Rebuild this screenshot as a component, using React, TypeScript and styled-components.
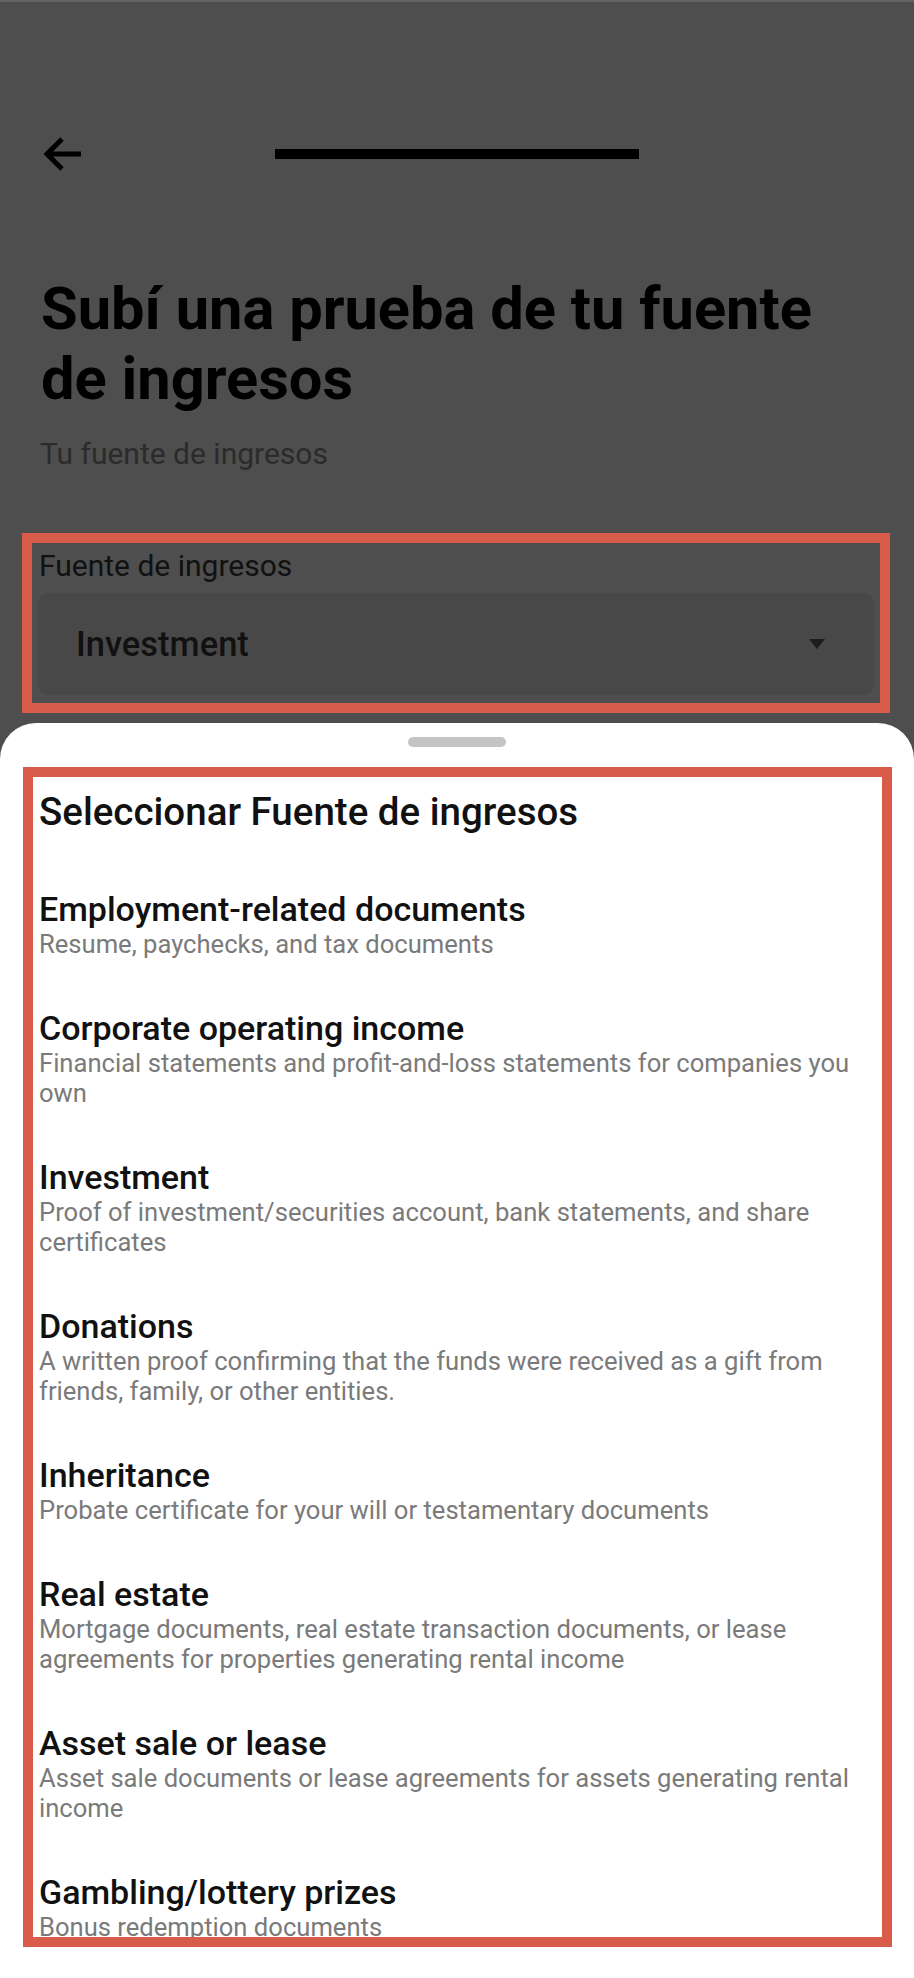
import styled, { createGlobalStyle } from "styled-components";

const GlobalStyle = createGlobalStyle`
  html, body {
    margin: 0;
    padding: 0;
    background: #4e4e4e;
  }
  body {
    font-family: Roboto, "Noto Sans", "Liberation Sans", sans-serif;
  }
`;

const sources = [
  { title: "Employment-related documents", text: "Resume, paychecks, and tax documents" },
  {
    title: "Corporate operating income",
    text: "Financial statements and profit-and-loss statements for companies you own",
  },
  {
    title: "Investment",
    text: "Proof of investment/securities account, bank statements, and share certificates",
  },
  {
    title: "Donations",
    text: "A written proof confirming that the funds were received as a gift from friends, family, or other entities.",
  },
  { title: "Inheritance", text: "Probate certificate for your will or testamentary documents" },
  {
    title: "Real estate",
    text: "Mortgage documents, real estate transaction documents, or lease agreements for properties generating rental income",
  },
  {
    title: "Asset sale or lease",
    text: "Asset sale documents or lease agreements for assets generating rental income",
  },
  { title: "Gambling/lottery prizes", text: "Bonus redemption documents" },
];

function App() {
  return (
    <Page>
      <GlobalStyle />
      <TopBar>
        <BackButton aria-label="Volver">
          <svg width="40" height="36" viewBox="0 0 40 36" fill="none">
            <path
              d="M39 18H5 M20 3 L5 18 L20 33"
              stroke="#000"
              strokeWidth="5"
              strokeLinejoin="miter"
            />
          </svg>
        </BackButton>
        <Progress />
        <span />
      </TopBar>

      <Title>Subí una prueba de tu fuente de ingresos</Title>
      <Subtitle>Tu fuente de ingresos</Subtitle>

      <FieldFrame>
        <FieldLabel>Fuente de ingresos</FieldLabel>
        <Select>
          <SelectValue>Investment</SelectValue>
          <svg width="16" height="10" viewBox="0 0 16 10">
            <polygon points="0,0 16,0 8,10" fill="#1d1d1d" />
          </svg>
        </Select>
      </FieldFrame>

      <Sheet>
        <Handle />
        <ListFrame>
          <SheetHeading>Seleccionar Fuente de ingresos</SheetHeading>
          <OptionList>
            {sources.map((s) => (
              <Option key={s.title}>
                <OptionTitle>{s.title}</OptionTitle>
                <OptionText>{s.text}</OptionText>
              </Option>
            ))}
          </OptionList>
        </ListFrame>
      </Sheet>
    </Page>
  );
}

export default App;

const Page = styled.div`
  width: 914px;
  height: 1978px;
  box-sizing: border-box;
  border-top: 2px solid #646464;
  background: #4e4e4e;
  display: flex;
  flex-direction: column;
  overflow: hidden;
`;

const TopBar = styled.div`
  margin-top: 128px;
  height: 48px;
  padding: 0 42px;
  display: grid;
  grid-template-columns: 1fr 364px 1fr;
  align-items: center;
`;

const BackButton = styled.button`
  background: none;
  border: 0;
  padding: 0;
  width: 40px;
  height: 36px;
  display: flex;
  cursor: pointer;
`;

const Progress = styled.div`
  height: 10px;
  background: #000;
`;

const Title = styled.h1`
  margin: 96px 41px 0;
  font-size: 59.6px;
  line-height: 70px;
  font-weight: 700;
  color: #000;
`;

const Subtitle = styled.p`
  margin: 23px 40px 0;
  font-size: 30px;
  line-height: 34px;
  color: #2b2b2b;
`;

const FieldFrame = styled.div`
  margin: 62px 24px 0 22px;
  border: 10px solid #d95b4a;
  padding: 6px 6px 8px;
`;

const FieldLabel = styled.div`
  padding-left: 1px;
  font-size: 30px;
  line-height: 34px;
  color: #111;
`;

const Select = styled.div`
  margin-top: 10px;
  height: 102px;
  box-sizing: border-box;
  border-radius: 10px;
  background: #484848;
  padding: 0 49px 0 38px;
  display: flex;
  align-items: center;
  justify-content: space-between;
`;

const SelectValue = styled.span`
  font-size: 34.5px;
  font-weight: 500;
  color: #111;
`;

const Sheet = styled.div`
  margin-top: 10px;
  flex: 1;
  background: #fff;
  border-radius: 36px 36px 0 0;
  padding-top: 14px;
  display: flex;
  flex-direction: column;
`;

const Handle = styled.div`
  align-self: center;
  width: 98px;
  height: 10px;
  border-radius: 5px;
  background: #c4c4c4;
`;

const ListFrame = styled.div`
  margin: 20px 22px 0 23px;
  height: 1180px;
  box-sizing: border-box;
  border: 10px solid #d95b4a;
  padding: 12px 18px 0 6px;
  overflow: hidden;
`;

const SheetHeading = styled.h2`
  margin: 0 0 54px;
  font-size: 38.5px;
  line-height: 46px;
  font-weight: 500;
  color: #111;
`;

const OptionList = styled.div`
  display: flex;
  flex-direction: column;
  gap: 49px;
`;

const Option = styled.div`
  display: flex;
  flex-direction: column;
`;

const OptionTitle = styled.div`
  font-size: 34px;
  line-height: 40px;
  font-weight: 500;
  color: #111;
`;

const OptionText = styled.div`
  font-size: 25.6px;
  line-height: 30px;
  color: #7a7a7a;
`;
